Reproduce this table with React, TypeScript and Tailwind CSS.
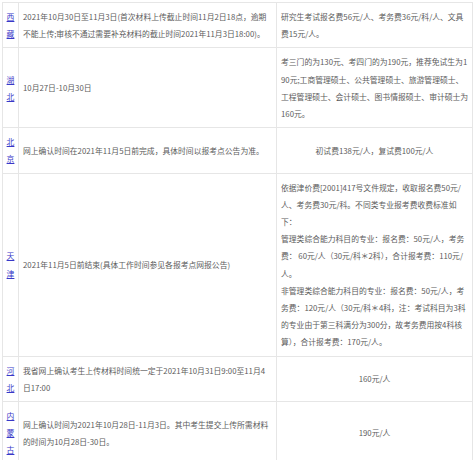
const rows = [
  {
    province: ['西', '藏'],
    time: ['2021年10月30日至11月3日(首次材料上传截止时间11月2日18点，逾期', '不能上传;审核不通过需要补充材料的截止时间2021年11月3日18:00)。'],
    fee: ['研究生考试报名费56元/人、考务费36元/科/人、文具', '费15元/人。'],
    center: false,
  },
  {
    province: ['湖', '北'],
    time: ['10月27日-10月30日'],
    fee: [
      '考三门的为130元、考四门的为190元，推荐免试生为1',
      '90元;工商管理硕士、公共管理硕士、旅游管理硕士、',
      '工程管理硕士、会计硕士、图书情报硕士、审计硕士为',
      '160元。',
    ],
    center: false,
  },
  {
    province: ['北', '京'],
    time: ['网上确认时间在2021年11月5日前完成，具体时间以报考点公告为准。'],
    fee: ['初试费138元/人，复试费100元/人'],
    center: true,
  },
  {
    province: ['天', '津'],
    time: ['2021年11月5日前结束(具体工作时间参见各报考点网报公告)'],
    fee: [
      '依据津价费[2001]417号文件规定，收取报名费50元/',
      '人、考务费30元/科。不同类专业报考费收费标准如',
      '下：',
      '管理类综合能力科目的专业：报名费：50元/人，考务',
      '费： 60元/人（30元/科＊2科），合计报考费：110元/',
      '人。',
      '非管理类综合能力科目的专业：报名费：50元/人，考',
      '务费：120元/人（30元/科＊4科，注：考试科目为3科',
      '的专业由于第三科满分为300分，故考务费用按4科核',
      '算），合计报考费：170元/人。',
    ],
    center: false,
  },
  {
    province: ['河', '北'],
    time: ['我省网上确认考生上传材料时间统一定于2021年10月31日9:00至11月4', '日17:00'],
    fee: ['160元/人'],
    center: true,
  },
  {
    province: ['内', '蒙', '古'],
    time: ['网上确认时间为2021年10月28日-11月3日。其中考生提交上传所需材料', '的时间为10月28日-30日。'],
    fee: ['190元/人'],
    center: true,
  },
];

export default function App() {
  return (
    <div
      className="w-[474px] h-[460px] overflow-hidden bg-white pt-[2px] pl-[2px]"
      style={{ fontFamily: '"Noto Sans CJK SC", "Liberation Sans", sans-serif' }}
    >
      <table className="table-fixed border-collapse w-[470px] text-[7.8px] leading-[17.2px] text-[#5c5c5c]">
        <colgroup>
          <col className="w-[16px]" />
          <col className="w-[258px]" />
          <col className="w-[196px]" />
        </colgroup>
        <tbody>
          {rows.map((row) => (
            <tr key={row.province.join('')}>
              <td className="border border-[#e6e6e6] py-[5px] px-0 text-center align-middle">
                {row.province.map((ch, i) => (
                  <a key={i} href="#" className="block text-[#3838c8] underline decoration-[#3838c8]">
                    {ch}
                  </a>
                ))}
              </td>
              <td className="border border-[#e6e6e6] py-[5px] px-[4px] align-middle">
                {row.time.map((line, i) => (
                  <div key={i} className="whitespace-nowrap">
                    {line}
                  </div>
                ))}
              </td>
              <td
                className={
                  row.center
                    ? 'border border-[#e6e6e6] py-[5px] px-[4px] align-middle text-center'
                    : 'border border-[#e6e6e6] py-[5px] px-[4px] align-middle'
                }
              >
                {row.fee.map((line, i) => (
                  <div key={i} className="whitespace-nowrap">
                    {line}
                  </div>
                ))}
              </td>
            </tr>
          ))}
        </tbody>
      </table>
    </div>
  );
}
